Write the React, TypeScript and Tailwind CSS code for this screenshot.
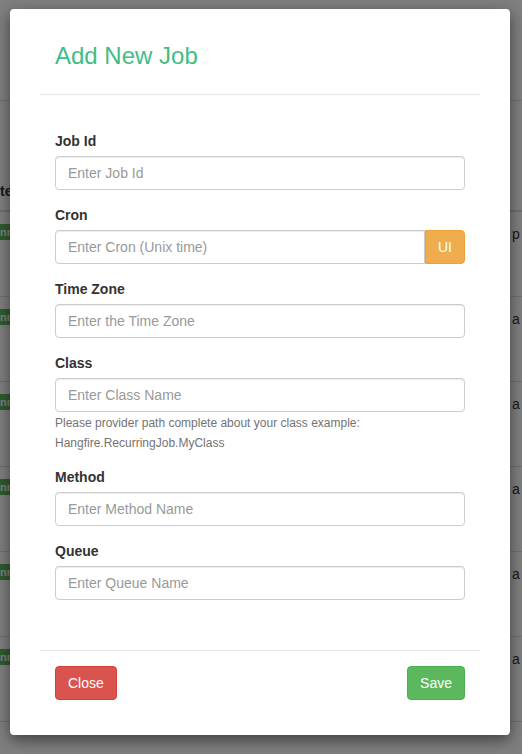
import React from "react";

const font = { fontFamily: '"Liberation Sans", Arial, Helvetica, sans-serif' };

type Field = {
  label: string;
  placeholder: string;
  addon?: string;
  help?: string[];
};

const fields: Field[] = [
  { label: "Job Id", placeholder: "Enter Job Id" },
  { label: "Cron", placeholder: "Enter Cron (Unix time)", addon: "UI" },
  { label: "Time Zone", placeholder: "Enter the Time Zone" },
  {
    label: "Class",
    placeholder: "Enter Class Name",
    help: [
      "Please provider path complete about your class example:",
      "Hangfire.RecurringJob.MyClass",
    ],
  },
  { label: "Method", placeholder: "Enter Method Name" },
  { label: "Queue", placeholder: "Enter Queue Name" },
];

const rows = ["p", "a", "a", "a", "a", "a"];

function BackgroundPage() {
  return (
    <div className="h-[754px] overflow-hidden bg-white text-[14px] text-[#333]">
      <div className="h-[101px] border-b border-[#ddd]" />
      {/* table header */}
      <div className="flex h-[111px] items-end border-b-2 border-[#ddd] pb-[9px]">
        <span className="font-bold leading-5">te</span>
      </div>
      {rows.map((r, i) => (
        <div
          key={i}
          className="flex h-[85px] items-start justify-between border-b border-[#ddd] pt-[12px]"
        >
          <span className="rounded-r-[3px] bg-[#5cb85c] px-0 py-[2px] text-[11px] font-bold leading-[12px] text-white">
            nn&nbsp;&nbsp;&nbsp;&nbsp;
          </span>
          <span className="mr-[1px] w-[9px] leading-5">{r}</span>
        </div>
      ))}
    </div>
  );
}

function FormField({ field }: { field: Field }) {
  return (
    <div className={field.help ? "mb-[14px]" : "mb-[15px]"}>
      <label className="mb-[5px] block text-[14px] font-bold leading-5 text-[#333]">
        {field.label}
      </label>
      <div className="flex">
        <input
          type="text"
          placeholder={field.placeholder}
          className={`h-[34px] min-w-0 flex-1 border border-[#ccc] bg-white px-[12px] text-[14px] text-[#555] shadow-[inset_0_1px_1px_rgba(0,0,0,0.075)] outline-none placeholder:text-[#999] ${
            field.addon ? "rounded-l-[4px]" : "rounded-[4px]"
          }`}
        />
        {field.addon && (
          <button className="h-[34px] w-[40px] rounded-r-[4px] border border-[#eea236] bg-[#f0ad4e] text-[14px] text-white">
            {field.addon}
          </button>
        )}
      </div>
      {field.help && (
        <div className="mt-[1px] text-[12px] leading-5 text-[#737373]">
          {field.help.map((line) => (
            <div key={line}>{line}</div>
          ))}
        </div>
      )}
    </div>
  );
}

export default function App() {
  return (
    <div className="relative h-[754px] w-[522px] overflow-hidden" style={font}>
      <BackgroundPage />

      {/* backdrop */}
      <div className="absolute inset-0 bg-black/50" />

      {/* modal */}
      <div className="absolute left-[10px] top-[9px] w-[500px] rounded-[4px] bg-white px-[30px] pb-[20px] shadow-[0_5px_15px_rgba(0,0,0,0.5)]">
        <div className="border-b border-[#e5e5e5] px-[15px] pb-[25px] pt-[34px]">
          <h4 className="text-[24px] leading-[26px] text-[#3fbd85]">Add New Job</h4>
        </div>

        <div className="px-[15px] pb-[35px] pt-[36px]">
          {fields.map((f) => (
            <FormField key={f.label} field={f} />
          ))}
        </div>

        <div className="flex justify-between border-t border-[#e5e5e5] px-[15px] pb-[15px] pt-[15px]">
          <button className="h-[34px] rounded-[4px] border border-[#d43f3a] bg-[#d9534f] px-[12px] text-[14px] text-white">
            Close
          </button>
          <button className="h-[34px] rounded-[4px] border border-[#4cae4c] bg-[#5cb85c] px-[12px] text-[14px] text-white">
            Save
          </button>
        </div>
      </div>
    </div>
  );
}
